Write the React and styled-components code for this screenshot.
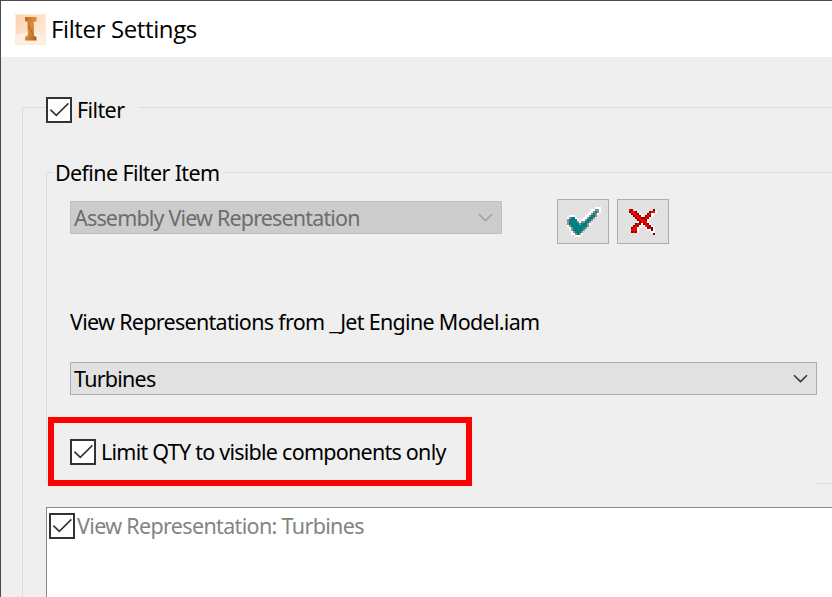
import { useState } from "react";
import styled, { createGlobalStyle } from "styled-components";

const GlobalStyle = createGlobalStyle`
  * {
    box-sizing: border-box;
  }
  body {
    margin: 0;
    overflow: hidden;
    background: #efefef;
  }
`;

const Window = styled.main`
  height: 597px;
  overflow: hidden;
  display: flex;
  flex-direction: column;
  border-top: 1px solid #4b4b57;
  border-left: 1px solid #4b4b57;
  background: #efefef;
  color: #000;
  font-family: "Noto Sans", sans-serif;
  font-size: 21.5px;
  line-height: 30px;
`;

const TitleBar = styled.header`
  height: 56px;
  flex: none;
  display: flex;
  align-items: center;
  gap: 5px;
  padding-left: 14px;
  background: #fff;
`;

const Title = styled.h1`
  margin: 0;
  font-family: "Open Sans", sans-serif;
  font-size: 24px;
  font-weight: 400;
  letter-spacing: -0.38px;
`;

const Text = styled.span`
  white-space: pre;
  color: ${({ $color }) => $color || "inherit"};
  letter-spacing: ${({ $spacing }) => $spacing ?? -0.7}px;
`;

const Outer = styled.fieldset`
  margin: 34px 0 0 21px;
  padding: 0;
  min-width: 0;
  height: 520px;
  border: 1px solid #dcdcdc;
  border-right: none;
`;

const OuterLegend = styled.legend`
  margin-left: 23px;
  padding: 6px 15px 0 0;
`;

const CheckLabel = styled.label`
  display: flex;
  align-items: center;
  gap: ${({ $gap }) => $gap ?? 5}px;
  height: 26px;
`;

const Box = styled.button`
  width: 26px;
  height: 26px;
  flex: none;
  display: flex;
  padding: 0;
  border: 2px solid #333;
  background: #fff;
`;

const Inner = styled.fieldset`
  margin: 33px 0 0 23px;
  padding: 0 0 0 23px;
  min-width: 0;
  height: 328px;
  border: 1px solid #dcdcdc;
  border-right: none;
`;

const InnerLegend = styled.legend`
  margin-left: -17px;
  padding: 2px 3px 0 2px;
`;

const Row = styled.div`
  display: flex;
  align-items: flex-start;
  padding-top: 13px;
`;

const Combo = styled.div`
  width: ${({ $width }) => $width}px;
  height: 33px;
  display: flex;
  align-items: center;
  justify-content: space-between;
  padding: 0 8px 0 3px;
  border: 1px solid ${({ $disabled }) => ($disabled ? "#bfbfbf" : "#adadad")};
  background: ${({ $disabled }) => ($disabled ? "#ccc" : "#e1e1e1")};
  color: ${({ $disabled }) => ($disabled ? "#6d6d6d" : "#000")};
`;

const ToolButton = styled.button`
  width: 52px;
  height: 45px;
  display: flex;
  align-items: flex-start;
  margin: -2px 0 0 ${({ $left }) => $left}px;
  padding: ${({ $pad }) => $pad};
  border: 1px solid #adadad;
  background: #e1e1e1;
`;

const Source = styled.div`
  margin: 63px 0 25px;
`;

// spans the same width as the combo above, so it hides the group's bottom line
const LimitRow = styled.div`
  width: 769px;
  margin: 22px 0 0 -22px;
  background: #efefef;
`;

const Highlight = styled.div`
  width: 424px;
  height: 69px;
  display: flex;
  align-items: center;
  padding-left: 16px;
  border: 6px solid #f00;
`;

const FilterList = styled.div`
  height: 120px;
  margin: 23px 0 0 23px;
  padding: 5px 0 0 2px;
  border: 1px solid #828790;
  border-right: none;
  background: #fff;
`;

const acceptPixels = [
  "..............www",
  "............wwggw",
  "...........wwgtgw",
  "..........wwgtgw.",
  ".www.....wwgttg..",
  "wgttw...wwgttg...",
  "gttttw.wwgttg....",
  "gttttgwggttg.....",
  "gtttttgtttgw.....",
  "wgttttttttg......",
  ".wgttttttg.......",
  ".wgtttttg........",
  "..wgtttg.........",
  "..wwgngw.........",
  "....www..........",
];

const cancelPixels = [
  "rd..........d.",
  "drrd......drrw",
  ".drrdw...drww.",
  "..drrdw.drdw..",
  "...drrddrdw...",
  "....drrrdw....",
  "....wdrrrw....",
  "...drdwdrdw...",
  "..drdw.wrrdw..",
  ".drrw...wdrdw.",
  ".rrrw....wwdw.",
  ".drdw......ww.",
  "............d.",
];

const palette = {
  w: "#fff",
  g: "#909090",
  t: "#008080",
  n: "#008000",
  r: "#f00",
  d: "#800000",
};

function PixelIcon({ rows }) {
  const width = rows[0].length;

  return (
    <svg
      width={width * 2}
      height={rows.length * 2}
      viewBox={`0 0 ${width} ${rows.length}`}
      shapeRendering="crispEdges"
    >
      {rows.map((row, y) =>
        [...row].map((c, x) =>
          c === "." ? null : (
            <rect key={`${x}-${y}`} x={x} y={y} width="1" height="1" fill={palette[c]} />
          )
        )
      )}
    </svg>
  );
}

function InventorIcon() {
  return (
    <svg width="31" height="31" viewBox="0 0 31 31">
      <defs>
        <linearGradient id="tile" x1="1" y1="1" x2="0" y2="0.2">
          <stop offset="0" stopColor="#fdeee2" />
          <stop offset="1" stopColor="#fbd5b5" />
        </linearGradient>
        <linearGradient id="beam" x1="0" y1="0" x2="1" y2="1">
          <stop offset="0" stopColor="#b8681c" />
          <stop offset="0.45" stopColor="#dc8f35" />
          <stop offset="1" stopColor="#a75d1c" />
        </linearGradient>
      </defs>
      <rect width="31" height="31" fill="#fdeadb" />
      <rect x="1" y="1" width="29" height="29" fill="url(#tile)" />
      <path d="M1 20.5 L16 17.5 L30 21.5 V30 H1Z" fill="#fdeee2" />
      <path
        d="M10 3 H21.5 V7 L18.8 8 V21.5 L21.5 23 V26.5 H10 V23 L12.7 21.5 V8 L10 7Z"
        fill="url(#beam)"
      />
      <path d="M12.7 8 L18.8 20 V21.5 L12.7 14Z" fill="#a85f1d" opacity="0.4" />
    </svg>
  );
}

function Chevron({ color }) {
  return (
    <svg width="15" height="9" viewBox="0 0 15 9">
      <path d="M1 1.2 L7.5 7.6 L14 1.2" fill="none" stroke={color} strokeWidth="1.5" />
    </svg>
  );
}

function Check({ gap, color, spacing, children }) {
  const [checked, setChecked] = useState(true);

  return (
    <CheckLabel $gap={gap}>
      <Box onClick={() => setChecked(!checked)}>
        {checked ? (
          <svg width="22" height="22" viewBox="0 0 22 22">
            <path d="M2.4 10.6 L8.3 16.4 L20.4 4.4" fill="none" stroke="#333" strokeWidth="1.6" />
          </svg>
        ) : null}
      </Box>
      <Text $color={color} $spacing={spacing}>
        {children}
      </Text>
    </CheckLabel>
  );
}

function App() {
  return (
    <Window>
      <GlobalStyle />
      <TitleBar>
        <InventorIcon />
        <Title>Filter Settings</Title>
      </TitleBar>
      <Outer>
        <OuterLegend>
          <Check spacing={-0.6}>Filter</Check>
        </OuterLegend>
        <Inner>
          <InnerLegend>
            <Text $spacing={-0.62}>Define Filter Item</Text>
          </InnerLegend>
          <Row>
            <Combo $width={432} $disabled>
              <Text $spacing={-0.83}>Assembly View Representation</Text>
              <Chevron color="#a0a0a0" />
            </Combo>
            <ToolButton $left={55} $pad="7px 0 0 9px" aria-label="Accept">
              <PixelIcon rows={acceptPixels} />
            </ToolButton>
            <ToolButton $left={8} $pad="9px 0 0 11px" aria-label="Cancel">
              <PixelIcon rows={cancelPixels} />
            </ToolButton>
          </Row>
          <Source>
            <Text>View Representations from _Jet Engine Model.iam</Text>
          </Source>
          <Combo $width={747}>
            <Text $spacing={-0.75}>Turbines</Text>
            <Chevron color="#333" />
          </Combo>
          <LimitRow>
            <Highlight>
              <Check spacing={-0.75}>Limit QTY to visible components only</Check>
            </Highlight>
          </LimitRow>
        </Inner>
        <FilterList>
          <Check gap={2} color="#838383" spacing={-0.66}>
            View Representation: Turbines
          </Check>
        </FilterList>
      </Outer>
    </Window>
  );
}

export default App;
